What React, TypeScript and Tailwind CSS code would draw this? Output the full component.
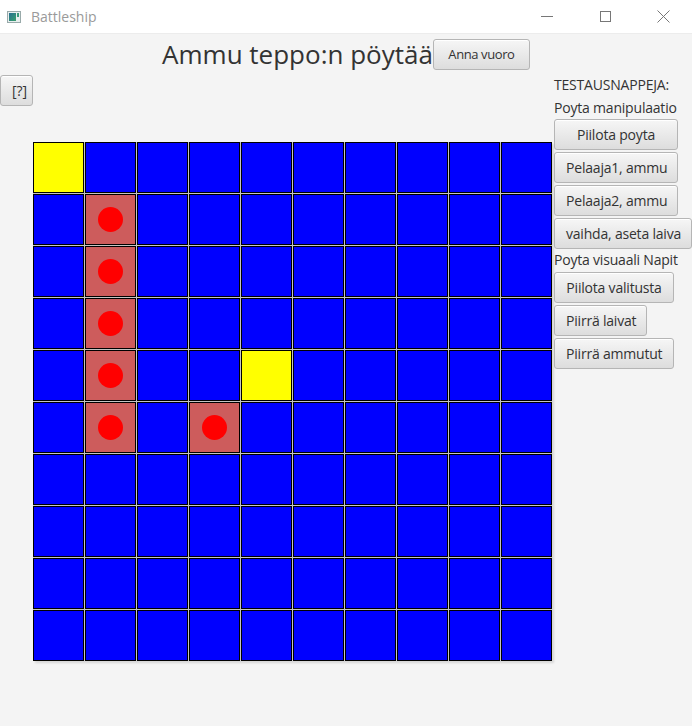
import React from "react";

const ships = new Set(["1-1", "2-1", "3-1", "4-1", "5-1", "5-3"]);
const marked = new Set(["0-0", "4-4"]);

function FxButton({ children, className = "" }: { children: React.ReactNode; className?: string }) {
  return (
    <button
      className={`h-[31px] px-[11px] rounded-[3px] border border-[#b5b5b5] bg-gradient-to-b from-[#f6f6f6] to-[#dddddd] text-[#333] shadow-[inset_0_1px_0_#ffffff] whitespace-nowrap ${className}`}
    >
      {children}
    </button>
  );
}

function TitleBar() {
  return (
    <div className="h-[34px] bg-white flex items-center border-b border-[#ececec]">
      <div className="ml-[7px] w-[14px] h-[12px] border border-[#9aa] bg-[#e8eeee] flex p-px gap-px">
        <div className="w-[8px] h-full bg-gradient-to-br from-[#2a6f8f] to-[#3aa06a]" />
        <div className="w-[2px] h-[4px] bg-[#3a9a7a]" />
      </div>
      <span className="ml-[10px] text-[14px] text-[#9a9a9a]">Battleship</span>
      <div className="ml-auto flex items-center">
        <div className="w-[58px] flex justify-center">
          <div className="w-[12px] h-px bg-[#777]" />
        </div>
        <div className="w-[58px] flex justify-center">
          <div className="w-[11px] h-[11px] border border-[#777]" />
        </div>
        <div className="w-[58px] flex justify-center">
          <svg width="13" height="13" viewBox="0 0 13 13">
            <path d="M0.5 0.5 L12.5 12.5 M12.5 0.5 L0.5 12.5" stroke="#777" strokeWidth="1" />
          </svg>
        </div>
      </div>
    </div>
  );
}

export default function App() {
  const rows = Array.from({ length: 10 }, (_, r) => r);
  const cols = Array.from({ length: 10 }, (_, c) => c);

  return (
    <div className="w-[692px] h-[726px] bg-[#f4f4f4] overflow-hidden" style={{ fontFamily: '"Open Sans", "Noto Sans", sans-serif' }}>
      <TitleBar />

      {/* Header */}
      <div className="flex justify-center items-center pt-[5px]">
        <h1 className="text-[26px] leading-[31px] text-[#333] font-normal">Ammu teppo:n pöytää</h1>
        <FxButton className="w-[97px] px-0 text-[13px] tracking-[-0.4px]">Anna vuoro</FxButton>
      </div>

      <div className="flex mt-[5px]">
        {/* Left */}
        <div className="w-[554px] flex flex-col">
          <FxButton className="w-[33px] px-0 text-[14px] self-start">[?]</FxButton>
          <div className="ml-[33px] mt-[36px] w-[519px] grid grid-cols-[repeat(10,51px)] gap-px bg-[#c4c4c4] shadow-[2px_2px_2px_rgba(0,0,0,0.12)]">
            {rows.map((r) =>
              cols.map((c) => {
                const key = `${r}-${c}`;
                const isShip = ships.has(key);
                const isMark = marked.has(key);
                const bg = isMark ? "bg-[#ffff00]" : isShip ? "bg-[#cd5c5c]" : "bg-[#0000ff]";
                return (
                  <div key={key} className={`h-[51px] border border-black flex items-center justify-center ${bg}`}>
                    {isShip && <div className="w-[25px] h-[25px] rounded-full bg-[#ff0000]" />}
                  </div>
                );
              })
            )}
          </div>
        </div>

        {/* Right panel */}
        <div className="flex flex-col items-start text-[14px] text-[#333] tracking-[-0.2px]">
          <div className="h-[21px] leading-[21px] mt-[-1px]">TESTAUSNAPPEJA:</div>
          <div className="h-[21px] leading-[21px] mt-[2px]">Poyta manipulaatio</div>
          <FxButton className="mt-[1px] w-[124px] text-[14px]">Piilota poyta</FxButton>
          <FxButton className="mt-[2px] w-[124px] text-[14px]">Pelaaja1, ammu</FxButton>
          <FxButton className="mt-[2px] w-[124px] text-[14px]">Pelaaja2, ammu</FxButton>
          <FxButton className="mt-[2px] w-[138px] px-0 text-[14px]">vaihda, aseta laiva</FxButton>
          <div className="h-[20px] leading-[20px] mt-[1px]">Poyta visuaali Napit</div>
          <FxButton className="mt-[2px] w-[120px] px-0 text-[14px]">Piilota valitusta</FxButton>
          <FxButton className="mt-[2px] w-[93px] px-0 text-[14px]">Piirrä laivat</FxButton>
          <FxButton className="mt-[2px] w-[120px] px-0 text-[14px]">Piirrä ammutut</FxButton>
        </div>
      </div>
    </div>
  );
}
